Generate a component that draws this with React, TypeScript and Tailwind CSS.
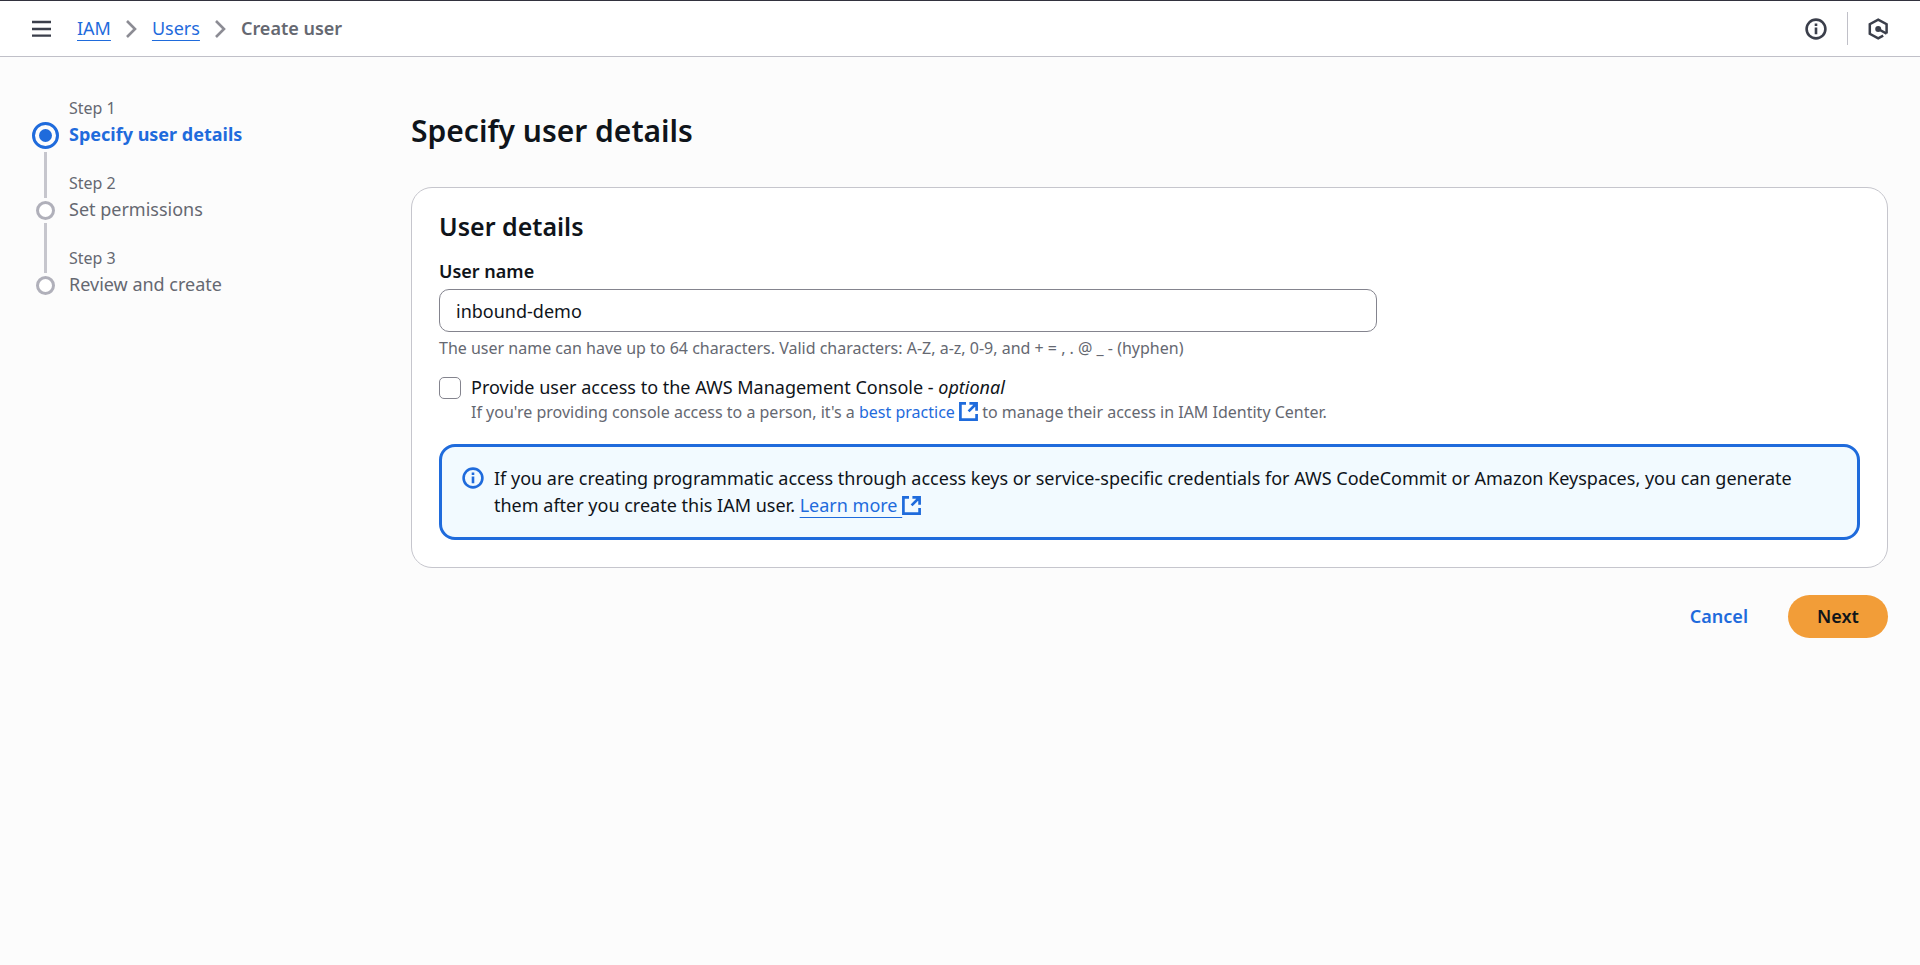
import type { ReactNode } from "react";

function MenuIcon() {
  return (
    <svg className="h-[18px] w-[19px]" viewBox="0 0 19 18" aria-hidden="true">
      <path d="M0 2h19M0 9h19M0 15.6h19" stroke="#3b3f4b" strokeWidth="2.4" fill="none" />
    </svg>
  );
}

function ChevronIcon() {
  return (
    <svg className="h-[18px] w-[11px]" viewBox="0 0 11 18" aria-hidden="true">
      <path d="M1 1l8 8-8 8" stroke="#8c8c94" strokeWidth="2.6" fill="none" />
    </svg>
  );
}

function InfoIcon() {
  return (
    <svg className="h-[22px] w-[22px]" viewBox="0 0 22 22" fill="none" stroke="currentColor" strokeWidth="2.6" aria-hidden="true">
      <circle cx="11" cy="11" r="9.4" />
      <path d="M11 9.4v6.8M11 5.6v2.4" />
    </svg>
  );
}

function HexagonIcon() {
  return (
    <svg className="h-[22px] w-5" viewBox="0 0 20 22" fill="none" stroke="currentColor" strokeWidth="2.5" aria-hidden="true">
      <path d="M18.6 15.6V6.2L10.2 1.7 1.8 6.2v9.6l8.4 4.5 5-2.7" />
      <path d="M10.2 11l8.4 4.6" />
      <circle cx="10.2" cy="11" r="3" fill="currentColor" stroke="none" />
    </svg>
  );
}

function ExternalIcon() {
  return (
    <svg className="inline-block h-[19px] w-[19px] align-[-3px]" viewBox="0 0 19 19" fill="none" stroke="currentColor" strokeWidth="2.7" aria-hidden="true">
      <path d="M7 1.4H1.4v16.2h16.2V12M10.4 1.4h7.2v7.4M17.2 1.8L9.6 9.4" />
    </svg>
  );
}

function Step({ label, title, active, last }: { label: string; title: string; active?: boolean; last?: boolean }) {
  return (
    <li className="flex gap-2.5">
      <div className="flex w-[27px] flex-col items-center">
        {active ? (
          <span className="mt-[27px] flex h-[27px] w-[27px] shrink-0 items-center justify-center rounded-full border-3 border-[#1f6bdc]">
            <span className="h-[13px] w-[13px] rounded-full bg-[#1f6bdc]" />
          </span>
        ) : (
          <span className="mt-[31px] h-[19px] w-[19px] shrink-0 rounded-full border-3 border-[#b0b0ba] bg-white" />
        )}
        {!last && <span className="mt-[3px] -mb-7 w-[3px] grow bg-[#c6c6cd]" />}
      </div>
      <div className="h-[75px]">
        <div className="text-[16px] leading-[26px] text-[#656871]">{label}</div>
        <div className={active ? "leading-[27px] font-bold text-[#1f6bdc]" : "leading-[27px] text-[#656871]"}>{title}</div>
      </div>
    </li>
  );
}

function CrumbLink({ children }: { children: ReactNode }) {
  return (
    <a href="#" className="text-[#1f6bdc] underline decoration-1 underline-offset-[5px]">
      {children}
    </a>
  );
}

export default function App() {
  return (
    <div className="min-h-screen bg-[#fcfcfc] font-['Noto_Sans',sans-serif] text-[18px] text-[#0f141a]">
      <header className="flex h-[57px] items-center justify-between border-t border-b border-t-[#32323e] border-b-[#c0c0c8] bg-white px-8">
        <nav aria-label="Breadcrumbs" className="flex items-center">
          <button type="button" aria-label="Open navigation" className="mr-[26px]">
            <MenuIcon />
          </button>
          <ol className="flex items-center gap-[15px]">
            <li><CrumbLink>IAM</CrumbLink></li>
            <li aria-hidden="true"><ChevronIcon /></li>
            <li><CrumbLink>Users</CrumbLink></li>
            <li aria-hidden="true"><ChevronIcon /></li>
            <li className="font-semibold text-[#656871]">Create user</li>
          </ol>
        </nav>
        <div className="flex items-center text-[#3b3f4b]">
          <button type="button" aria-label="Info"><InfoIcon /></button>
          <span className="mr-5 ml-5 h-[33px] w-px bg-[#c0c0c8]" />
          <button type="button" aria-label="Assistant"><HexagonIcon /></button>
        </div>
      </header>
      <div className="flex px-8 pt-[38px]">
        <ol className="w-[379px] shrink-0">
          <Step label="Step 1" title="Specify user details" active />
          <Step label="Step 2" title="Set permissions" />
          <Step label="Step 3" title="Review and create" last />
        </ol>
        <main className="min-w-0 grow pt-4">
          <h1 className="text-[30px] leading-10 font-semibold">Specify user details</h1>
          <section className="mt-9 rounded-[21px] border border-[#c6c6cd] bg-white px-[27px] pt-[22px] pb-[27px]">
            <h2 className="text-[25px] leading-8 font-semibold">User details</h2>
            <label htmlFor="user-name" className="mt-4 block leading-[27px] font-semibold">User name</label>
            <input
              id="user-name"
              type="text"
              defaultValue="inbound-demo"
              className="mt-1 block h-[43px] w-[66%] rounded-[10px] border border-[#84848e] bg-white px-4"
            />
            <p className="mt-[3px] text-[16px] leading-[27px] text-[#656871]">
              The user name can have up to 64 characters. Valid characters: A-Z, a-z, 0-9, and + = , . @ _ - (hyphen)
            </p>
            <div className="mt-3 flex gap-2.5">
              <input id="console-access" type="checkbox" className="mt-[3px] h-[22px] w-[22px] shrink-0 appearance-none rounded-[5px] border border-[#84848e] bg-white" />
              <div>
                <label htmlFor="console-access" className="block leading-[27px]">
                  Provide user access to the AWS Management Console - <i>optional</i>
                </label>
                <p className="text-[16px] leading-[22px] text-[#656871]">
                  If you're providing console access to a person, it's a{" "}
                  <a href="#" className="text-[#1f6bdc]">best practice <ExternalIcon /></a> to manage their access in IAM Identity Center.
                </p>
              </div>
            </div>
            <div className="mt-[21px] flex gap-2.5 rounded-2xl border-3 border-[#1f6bdc] bg-[#f2faff] px-5 py-[18px]">
              <span className="mt-[2px] shrink-0 text-[#1f6bdc]"><InfoIcon /></span>
              <p className="leading-[27px]">
                If you are creating programmatic access through access keys or service-specific credentials for AWS CodeCommit or Amazon Keyspaces, you can generate them after you create this IAM user.{" "}
                <a href="#" className="text-[#1f6bdc] underline decoration-1 underline-offset-[5px]">Learn more&nbsp;<ExternalIcon /></a>
              </p>
            </div>
          </section>
          <div className="mt-[27px] flex justify-end gap-3">
            <button type="button" className="h-[43px] rounded-full px-7 font-semibold text-[#1f6bdc]">Cancel</button>
            <button type="button" className="h-[43px] w-[100px] rounded-full bg-[#f29d38] font-semibold">Next</button>
          </div>
        </main>
      </div>
    </div>
  );
}
